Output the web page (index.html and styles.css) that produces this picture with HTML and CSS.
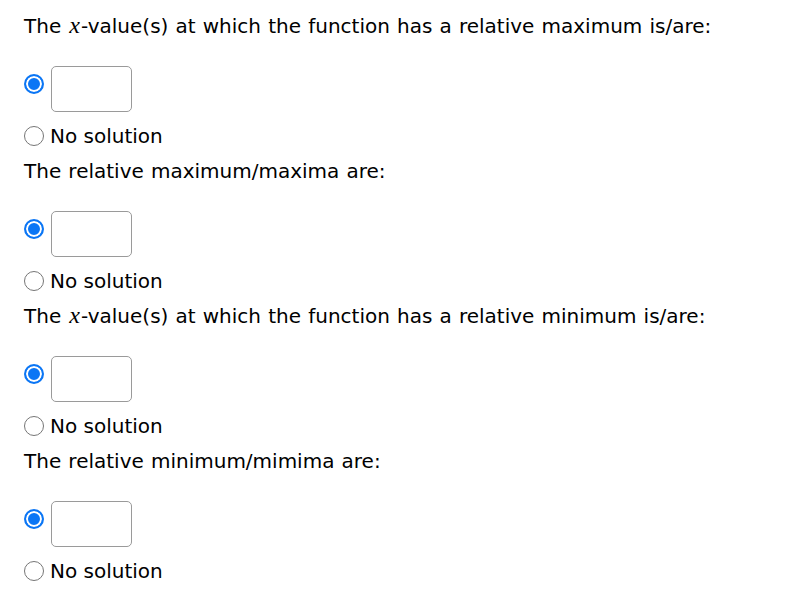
FILE: index.html
```html
<!DOCTYPE html>
<html lang="en">

<head>
    <meta charset="UTF-8">
    <meta name="viewport" content="width=device-width, initial-scale=1.0">
    <title>Relative extrema</title>
    <link rel="stylesheet" href="styles.css">
</head>

<body>
    <form class="answers">
        <!-- 극대 x값 -->
        <div class="part">
            <p class="prompt">The <span class="math">x</span>-value(s) at which the function has a relative maximum is/are:</p>
            <label class="entry">
                <input type="radio" name="max_x" checked>
                <input type="text" class="answer">
            </label>
            <label class="none">
                <input type="radio" name="max_x">
                <span>No solution</span>
            </label>
        </div>

        <!-- 극댓값 -->
        <div class="part">
            <p class="prompt">The relative maximum/maxima are:</p>
            <label class="entry">
                <input type="radio" name="max_y" checked>
                <input type="text" class="answer">
            </label>
            <label class="none">
                <input type="radio" name="max_y">
                <span>No solution</span>
            </label>
        </div>

        <!-- 극소 x값 -->
        <div class="part">
            <p class="prompt">The <span class="math">x</span>-value(s) at which the function has a relative minimum is/are:</p>
            <label class="entry">
                <input type="radio" name="min_x" checked>
                <input type="text" class="answer">
            </label>
            <label class="none">
                <input type="radio" name="min_x">
                <span>No solution</span>
            </label>
        </div>

        <!-- 극솟값 -->
        <div class="part">
            <p class="prompt">The relative minimum/mimima are:</p>
            <label class="entry">
                <input type="radio" name="min_y" checked>
                <input type="text" class="answer">
            </label>
            <label class="none">
                <input type="radio" name="min_y">
                <span>No solution</span>
            </label>
        </div>
    </form>
</body>

</html>
```

FILE: styles.css
```css
body {
    margin: 0;
    background-color: #ffffff;
    color: #000000;
    font-family: "DejaVu Sans", Verdana, sans-serif;
    font-size: 20px;
    line-height: 24px;
}

.answers {
    display: flex;
    flex-direction: column;
    padding: 14px 24px 0;
}

.part {
    display: flex;
    flex-direction: column;
    margin-bottom: 11px;
}

.prompt {
    margin: 0 0 28px;
    word-spacing: 0.8px;
}

/* 수식 x: 줄 높이에 영향 없게 */
.math {
    font-family: "Liberation Serif", "DejaVu Serif", serif;
    font-style: italic;
    font-size: 24px;
    line-height: 0;
    margin: 0 1px;
}

.entry {
    display: flex;
    align-items: flex-start;
    gap: 7px;
    margin-bottom: 12px;
}

.entry input[type="radio"] {
    margin-top: 8px;
}

.none {
    display: flex;
    align-items: center;
    gap: 6px;
    height: 24px;
}

/* 라디오 버튼 직접 그리기 */
input[type="radio"] {
    appearance: none;
    -webkit-appearance: none;
    margin: 0;
    width: 20px;
    height: 20px;
    border: 1.5px solid #767676;
    border-radius: 50%;
    background-color: #ffffff;
    flex: none;
}

input[type="radio"]:checked {
    border: 2px solid #0b76f5;
    box-shadow: inset 0 0 0 2px #ffffff;
    background-color: #0b76f5;
}

.answer {
    box-sizing: border-box;
    width: 81px;
    height: 46px;
    margin: 0;
    border: 1px solid #9a9a9a;
    border-radius: 5px;
    background-color: #ffffff;
    font-size: 16px;
}

.answer:focus {
    outline: none;
}
```
